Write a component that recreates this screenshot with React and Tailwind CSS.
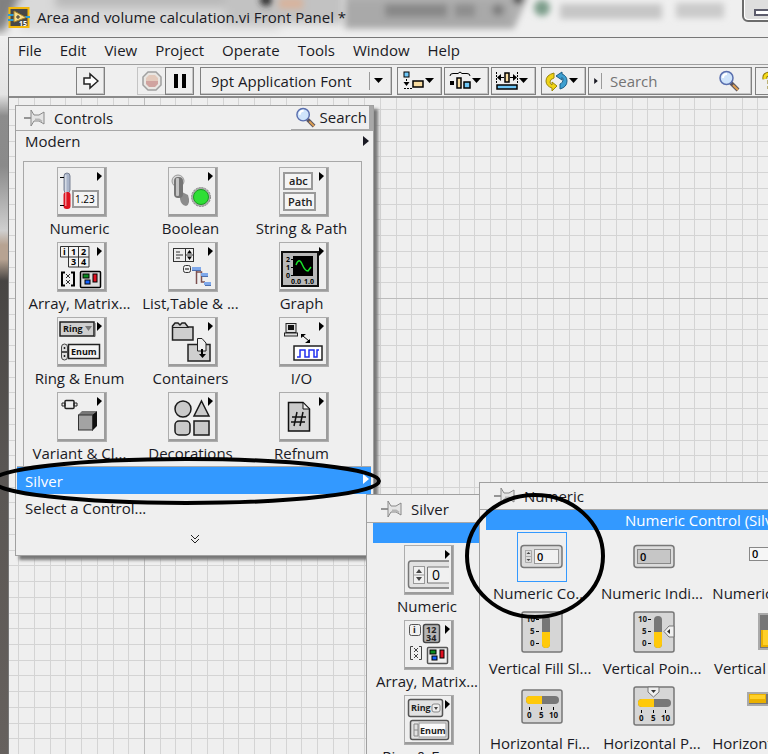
import React from "react";

const menus = ["File", "Edit", "View", "Project", "Operate", "Tools", "Window", "Help"];

// Small black triangle in the corner of a category tile
function Corner() {
  return <path d="M40 4 L45 8 L40 13 Z" fill="#000" />;
}

// Small LED, used in the cluster icons
function ClusterBox({ x, y, fill, stroke }) {
  return (
    <g transform={`translate(${x} ${y})`}>
      <rect x="0.5" y="0.5" width="20" height="16" rx="1" fill={fill} stroke={stroke} strokeWidth="1.500" />
      <rect x="3" y="3" width="6" height="4" fill="#0a8a20" stroke="#000" />
      <rect x="13" y="3" width="4" height="8" fill="#e01020" stroke="#000" />
      <rect x="5" y="9" width="5" height="4" fill="#1060ff" stroke="#000" />
    </g>
  );
}

function Icon({ children }) {
  return (
    <svg
      viewBox="0 0 49 49"
      className="size-[49px] shrink-0"
      fill="none"
      stroke="none"
      fontFamily="'Open Sans', sans-serif"
      aria-hidden="true"
    >
      {children}
    </svg>
  );
}

const NumericIcon = () => (
  <Icon>
    <rect x="7" y="5" width="6" height="20" rx="3" fill="#a9b4c9" stroke="#7a8294" />
    <rect x="6.500" y="24" width="7" height="17" rx="3" fill="#dd1420" />
    <rect x="8" y="7" width="1.500" height="31" fill="#fff" opacity="0.5" />
    <path d="M3 9.500H7M3 37.500H7" stroke="#000" />
    <rect x="16" y="23" width="25" height="16" fill="#f4f4f4" stroke="#9a9a9a" strokeWidth="2" />
    <text x="18" y="35" fontSize="10" fill="#000">1.23</text>
    <Corner />
  </Icon>
);

const BooleanIcon = () => (
  <Icon>
    <path d="M12 23 L20 27 Q23 36 18 38 Q13 37 12 31 Z" fill="#8c8c8c" />
    <circle cx="10" cy="13" r="6" fill="#d9d9d9" stroke="#999" />
    <rect x="6" y="9" width="9" height="21" rx="4" fill="#757575" />
    <rect x="8" y="10" width="3" height="18" rx="1" fill="#c4c4c4" />
    <circle cx="33" cy="29" r="9.500" fill="#aaa" stroke="#888" strokeDasharray="2 1" />
    <circle cx="33" cy="29" r="7.500" fill="#2fdf35" stroke="#1b9c22" />
    <Corner />
  </Icon>
);

const StringIcon = () => (
  <Icon>
    <rect x="5" y="5" width="28" height="16" fill="#f4f4f4" stroke="#9a9a9a" strokeWidth="2" />
    <text x="10" y="17" fontSize="11" fontWeight="600" fill="#222">abc</text>
    <rect x="5" y="25" width="31" height="17" fill="#f4f4f4" stroke="#9a9a9a" strokeWidth="2" />
    <text x="9" y="38" fontSize="11" fontWeight="600" fill="#222">Path</text>
    <Corner />
  </Icon>
);

const ArrayIcon = () => (
  <Icon>
    <path d="M3.500 3.500H32V24H11.500V14H3.500Z" fill="#f4f4f4" stroke="#333" />
    <path d="M11.500 3V14H32M21.500 3V24" stroke="#333" />
    <g fontSize="9" fontWeight="700" fill="#000">
      <text x="6" y="12">i</text>
      <text x="14" y="12">1</text>
      <text x="24" y="12">2</text>
      <text x="14" y="22">3</text>
      <text x="24" y="22">4</text>
    </g>
    <path d="M8 29.500H5V42.500H8M14 29.500H17V42.500H14" stroke="#000" strokeWidth="2" />
    <path d="M9 31l4 4m0-4l-4 4M9 37l4 4m0-4l-4 4" stroke="#333" />
    <ClusterBox x="23" y="28" fill="#ddd" stroke="#000" />
    <Corner />
  </Icon>
);

const ListIcon = () => (
  <Icon>
    <rect x="5.500" y="5.500" width="20" height="13" fill="#eee" stroke="#333" />
    <path d="M17.500 5V19M17 12H26M8 9H12M8 12H15M8 15H12" stroke="#333" />
    <path d="M21.500 7l2.500 3.500h-5ZM21.500 17l2.500-3.500h-5Z" fill="#000" />
    <rect x="15.500" y="22.500" width="7" height="7" rx="2" fill="#eee" stroke="#333" />
    <path d="M17 26H21" stroke="#000" />
    <path d="M28.500 27V41M28 29H33.500V39H37M33 33H35" stroke="#7d5050" strokeWidth="1.500" />
    <path d="M24 25.500H33M33 31.500H40M36 40.500H43" stroke="#7fa8ea" strokeWidth="3" />
    <path d="M24 27.500H33M34 33.500H40M37 42.500H43" stroke="#4c6fae" />
    <Corner />
  </Icon>
);

const GraphIcon = () => (
  <Icon>
    <rect x="3" y="9" width="36" height="34" fill="#b9b9b9" stroke="#111" strokeWidth="2" />
    <rect x="14" y="13" width="20" height="20" fill="#000" />
    <path d="M17 22 Q20 14 23 21 T29 28 L32 24" stroke="#19e02a" strokeWidth="1.500" />
    <path d="M12 16.500H14M12 24.500H14M12 32.500H14" stroke="#000" />
    <g fontSize="7" fontWeight="700" fill="#000">
      <text x="7" y="19">2</text>
      <text x="7" y="27">1</text>
      <text x="7" y="35">0</text>
      <text x="12" y="41">0.0</text>
      <text x="25" y="41">1.0</text>
    </g>
    <Corner />
  </Icon>
);

const RingIcon = () => (
  <Icon>
    <rect x="3" y="4" width="34" height="14" fill="#cfcfcf" stroke="#222" strokeWidth="1.500" />
    <path d="M4 18.500H38V5" stroke="#555" />
    <text x="6" y="14" fontSize="9" fontWeight="700" fill="#111">Ring</text>
    <path d="M28 8H35L31.500 13Z" fill="#777" />
    <rect x="11.500" y="26.500" width="31" height="14" fill="#f4f4f4" stroke="#222" strokeWidth="1.500" />
    <text x="14" y="37" fontSize="9" fontWeight="700" fill="#111">Enum</text>
    <rect x="4.500" y="26" width="6" height="16" rx="3" fill="#ddd" stroke="#444" />
    <path d="M5 34H10M7.500 29V31M7.500 37V39" stroke="#222" strokeWidth="1.500" />
    <Corner />
  </Icon>
);

const ContainersIcon = () => (
  <Icon>
    <path d="M4.500 22V8L7 5H10L12 7L14 5H17L20 9H25V22Z" fill="#cfcfcf" stroke="#222" strokeWidth="1.500" />
    <path d="M5 9.500H21" stroke="#222" />
    <path d="M20 26.500H42V43H20Z" fill="#cfcfcf" stroke="#222" strokeWidth="1.500" />
    <path d="M29.500 33V20.500H34L38 25V33Z" fill="#eee" stroke="#222" />
    <path d="M34 31V36" stroke="#000" strokeWidth="2" />
    <path d="M31 36H38L34.500 40Z" fill="#000" />
    <Corner />
  </Icon>
);

const IoIcon = () => (
  <Icon>
    <rect x="7" y="5.500" width="10" height="9" fill="#ddd" stroke="#222" />
    <rect x="9" y="7" width="6" height="5" fill="#111" />
    <rect x="5.500" y="15" width="13" height="3" fill="#ddd" stroke="#222" />
    <path d="M24 18L30 23" stroke="#000" />
    <path d="M22 16h5l-5 4ZM31 25h-5l5-4Z" fill="#000" />
    <rect x="15" y="28" width="28" height="14" fill="#fff" stroke="#222" strokeWidth="1.500" />
    <path d="M18 39H21V32H26V39H30V32H35V39H38V32H40" stroke="#2030f0" strokeWidth="1.500" />
    <Corner />
  </Icon>
);

const VariantIcon = () => (
  <Icon>
    <rect x="8" y="7.500" width="9" height="8" rx="1" fill="#eee" stroke="#222" strokeWidth="1.500" />
    <path d="M5 10H8V13H5ZM17 10H20V13H17Z" stroke="#222" />
    <path d="M21 22L25 18H40L35 22Z" fill="#777" />
    <path d="M35 22L40 18V33L35 38Z" fill="#111" />
    <rect x="21.500" y="22" width="14" height="15" fill="#a3a3a3" stroke="#333" />
    <Corner />
  </Icon>
);

const DecorationsIcon = () => (
  <Icon>
    <g fill="#cacaca" stroke="#1a1a1a" strokeWidth="1.500">
      <circle cx="15" cy="16" r="8" />
      <path d="M33.500 8L41 23H26Z" />
      <rect x="7" y="28" width="15" height="14" rx="4" />
      <rect x="26" y="28" width="15" height="14" />
    </g>
    <Corner />
  </Icon>
);

const RefnumIcon = () => (
  <Icon>
    <path d="M9.500 9.500H24L30.500 16V38H9.500Z" fill="#cacaca" stroke="#111" strokeWidth="1.500" />
    <path d="M24 9.500V16H30.500Z" fill="#f0f0f0" stroke="#111" />
    <path d="M18 19L15 33M24 19L21 33M13 24H27M12 29H26" stroke="#111" strokeWidth="1.500" />
    <Corner />
  </Icon>
);

const SilverNumericIcon = () => (
  <Icon>
    <path d="M44 15H6Q3.500 15 3.500 18V39Q3.500 42 6 42H44" fill="#e2e2e2" stroke="#777" strokeWidth="1.500" />
    <path d="M44 21H22.500V37H44" fill="#f0f0f0" stroke="#777" />
    <rect x="8.500" y="20.500" width="11" height="17" fill="#f0f0f0" stroke="#999" />
    <path d="M8 29H20" stroke="#999" />
    <path d="M14 23l3 4h-6ZM14 35l3-4h-6Z" fill="#444" />
    <text x="27" y="34" fontSize="14" fill="#000">0</text>
    <Corner />
  </Icon>
);

const SilverArrayIcon = () => (
  <Icon>
    <rect x="4.500" y="3.500" width="11" height="11" rx="2" fill="#f0f0f0" stroke="#555" />
    <text x="8" y="12" fontSize="9" fontWeight="700" fill="#222">i</text>
    <rect x="18.500" y="3.500" width="16" height="18" rx="2" fill="#b5b5b5" stroke="#444" strokeWidth="1.500" />
    <text x="21" y="12" fontSize="9" fontWeight="700" fill="#222">12</text>
    <text x="21" y="20" fontSize="9" fontWeight="700" fill="#222">34</text>
    <path d="M8 25.500H5.500V38.500H8M14 25.500H16.500V38.500H14" stroke="#444" />
    <path d="M9 27l4 4m0-4l-4 4M9 33l4 4m0-4l-4 4" stroke="#444" />
    <ClusterBox x="22" y="26" fill="#eee" stroke="#555" />
    <Corner />
  </Icon>
);

const SilverRingIcon = () => (
  <Icon>
    <rect x="3.500" y="3.500" width="34" height="17" rx="2" fill="#e2e2e2" stroke="#555" strokeWidth="1.500" />
    <text x="6" y="15" fontSize="9" fontWeight="700" fill="#222">Ring</text>
    <rect x="27" y="8" width="8" height="8" rx="2" fill="#eee" stroke="#888" />
    <path d="M29 11H33L31 14Z" fill="#444" />
    <rect x="5.500" y="24.500" width="38" height="19" rx="2" fill="#e2e2e2" stroke="#555" strokeWidth="1.500" />
    <rect x="14" y="27" width="27" height="14" fill="#fafafa" stroke="#999" />
    <path d="M9 28V40H13V28ZM9 34H13" stroke="#888" />
    <text x="15" y="38" fontSize="9" fontWeight="700" fill="#222">Enum</text>
    <Corner />
  </Icon>
);

const NumControlIcon = () => (
  <Icon>
    <rect x="3" y="12.500" width="41" height="22" rx="3" fill="#dcdcdc" stroke="#777" strokeWidth="1.500" />
    <rect x="16.500" y="16.500" width="24" height="14" fill="#f2f2f2" stroke="#999" />
    <path d="M7 17.500H13.500V29.500H7.500V17.500M7 23.500H13" stroke="#aaa" />
    <path d="M10.500 19l2 2h-4ZM10.500 28l2-2h-4Z" fill="#444" />
    <text x="19" y="28" fontSize="11" fontWeight="600" fill="#000">0</text>
  </Icon>
);

const NumIndicatorIcon = () => (
  <Icon>
    <rect x="4" y="12.500" width="40" height="22" rx="3" fill="#dcdcdc" stroke="#777" strokeWidth="1.500" />
    <rect x="7.500" y="16.500" width="33" height="14" fill="#c6c6c6" stroke="#888" />
    <text x="10" y="28" fontSize="11" fontWeight="600" fill="#000">0</text>
  </Icon>
);

const NumConstantIcon = () => (
  <Icon>
    <rect x="7.500" y="14.500" width="38" height="13" fill="#f6f6f6" stroke="#888" />
    <text x="10" y="25" fontSize="11" fontWeight="600" fill="#000">0</text>
  </Icon>
);

function VerticalScale() {
  return (
    <>
      <rect x="4" y="4" width="40" height="40" rx="2" fill="#d6d6d6" stroke="#777" strokeWidth="1.500" />
      <g fontSize="8" fontWeight="700" fill="#222">
        <text x="8" y="14">10</text>
        <text x="12" y="26">5</text>
        <text x="12" y="38">0</text>
      </g>
      <path d="M18 11.500H21M18 23.500H21M18 35.500H21" stroke="#000" />
      <rect x="24" y="8" width="8" height="32" rx="4" fill="#777" />
      <path d="M24 24H32V36Q32 40 28 40T24 36Z" fill="#ffc90a" />
    </>
  );
}

const VerticalFillIcon = () => (
  <Icon>
    <VerticalScale />
  </Icon>
);

const VerticalPointerIcon = () => (
  <Icon>
    <VerticalScale />
    <path d="M34 23.500L39 18H44V29H39Z" fill="#f0f0f0" stroke="#777" />
    <path d="M40 21V26L37 23.500Z" fill="#333" />
  </Icon>
);

const VerticalProgressIcon = () => (
  <Icon>
    <rect x="17" y="6" width="16" height="35" fill="#777" stroke="#aaa" strokeWidth="2" />
    <rect x="19" y="22" width="12" height="17" fill="#eab000" />
    <rect x="21" y="22" width="5" height="15" fill="#ffd028" />
  </Icon>
);

function HorizontalScale({ top, height, bar }) {
  return (
    <>
      <rect x="4" y={top} width="40" height={height} rx="2" fill="#d6d6d6" stroke="#777" strokeWidth="1.500" />
      <rect x="8" y={bar} width="33" height="8" rx="4" fill="#777" />
      <path d={`M24 ${bar}V${bar + 8}H12Q8 ${bar + 8} 8 ${bar + 4}T12 ${bar}Z`} fill="#ffc90a" />
      <path d={`M11.500 ${bar + 11}v3M23.500 ${bar + 11}v3M35.500 ${bar + 11}v3`} stroke="#000" />
      <g fontSize="8" fontWeight="700" fill="#111">
        <text x="9" y={bar + 22}>0</text>
        <text x="21" y={bar + 22}>5</text>
        <text x="31" y={bar + 22}>10</text>
      </g>
    </>
  );
}

const HorizontalFillIcon = () => (
  <Icon>
    <HorizontalScale top={7} height={33} bar={13} />
  </Icon>
);

const HorizontalPointerIcon = () => (
  <Icon>
    <HorizontalScale top={4} height={38} bar={16} />
    <path d="M18 4V9L23.500 14L29 9V4Z" fill="#f0f0f0" stroke="#777" />
    <path d="M21 7H26L23.500 10Z" fill="#333" />
  </Icon>
);

const HorizontalProgressIcon = () => (
  <Icon>
    <rect x="6" y="10" width="38" height="12" fill="#777" stroke="#aaa" strokeWidth="2" />
    <rect x="7" y="11" width="17" height="9" fill="#eab000" />
    <rect x="8" y="12" width="15" height="4" fill="#ffd028" />
  </Icon>
);

const modernItems = [
  { name: "Numeric", icon: NumericIcon },
  { name: "Boolean", icon: BooleanIcon },
  { name: "String & Path", icon: StringIcon },
  { name: "Array, Matrix...", icon: ArrayIcon },
  { name: "List,Table & ...", icon: ListIcon },
  { name: "Graph", icon: GraphIcon },
  { name: "Ring & Enum", icon: RingIcon },
  { name: "Containers", icon: ContainersIcon },
  { name: "I/O", icon: IoIcon },
  { name: "Variant & Cl...", icon: VariantIcon },
  { name: "Decorations", icon: DecorationsIcon },
  { name: "Refnum", icon: RefnumIcon },
];

const silverItems = [
  { name: "Numeric", icon: SilverNumericIcon },
  { name: "Array, Matrix...", icon: SilverArrayIcon },
  { name: "Ring & Enum", icon: SilverRingIcon },
];

const numericItems = [
  { name: "Numeric Co...", icon: NumControlIcon, selected: true },
  { name: "Numeric Indi...", icon: NumIndicatorIcon },
  { name: "Numeric Con...", icon: NumConstantIcon },
  { name: "Vertical Fill Sl...", icon: VerticalFillIcon },
  { name: "Vertical Poin...", icon: VerticalPointerIcon },
  { name: "Vertical Prog...", icon: VerticalProgressIcon },
  { name: "Horizontal Fi...", icon: HorizontalFillIcon },
  { name: "Horizontal P...", icon: HorizontalPointerIcon },
  { name: "Horizontal Pr...", icon: HorizontalProgressIcon },
];

// One palette entry: icon tile with its label below
function PaletteItem({ item, raised }) {
  const ItemIcon = item.icon;
  let frame = "border-transparent";
  if (raised) frame = "border-[#adadad] shadow-[inset_-2px_-2px_0_#9c9c9c]";
  if (item.selected) frame = "border-[#3399ff]";
  return (
    <button className="flex h-[75px] w-full flex-col items-center whitespace-nowrap">
      <span className={`ml-1 flex size-[50px] shrink-0 items-center justify-center border ${frame}`}>
        <ItemIcon />
      </span>
      <span className="leading-[22px]">{item.name}</span>
    </button>
  );
}

function Pin() {
  return (
    <svg viewBox="0 0 22 18" className="h-[18px] w-[22px] shrink-0" fill="none" aria-hidden="true">
      <path d="M0 9H7" stroke="#777" strokeWidth="1.500" />
      <path d="M7 1V17L10 12H15L20 15V3L15 6H10Z" fill="#e4e4e4" stroke="#888" />
      <path d="M11 10.500H15L18 12.500" stroke="#b5b5b5" strokeWidth="2" />
    </svg>
  );
}

function Magnifier({ className }) {
  return (
    <svg viewBox="0 0 22 22" className={className} fill="none" aria-hidden="true">
      <path d="M13 13L20 20" stroke="#5b5560" strokeWidth="4" />
      <path d="M15 15L20 20" stroke="#e0a050" strokeWidth="2" />
      <circle cx="8.500" cy="8" r="6.500" fill="#cfe4fb" stroke="#5a6fae" strokeWidth="1.500" />
      <path d="M5 8Q5 4 9 4" stroke="#fff" strokeWidth="2" />
    </svg>
  );
}

function Down() {
  return (
    <svg viewBox="0 0 9 5" className="h-[5px] w-[9px] shrink-0" aria-hidden="true">
      <path d="M0 0H9L4.500 5Z" fill="#000" />
    </svg>
  );
}

function Right({ className }) {
  return (
    <svg viewBox="0 0 6 10" className={`shrink-0 ${className}`} aria-hidden="true">
      <path d="M0 0L6 5L0 10Z" fill="currentColor" />
    </svg>
  );
}

function ToolButton({ label, children }) {
  return (
    <button
      aria-label={label}
      className="flex h-7 w-[45px] shrink-0 items-center border border-[#808080] pl-[3px] shadow-[inset_-1px_-1px_0_#c4c4c4]"
    >
      <svg viewBox="0 0 24 20" className="h-5 w-6 shrink-0" fill="none" aria-hidden="true">
        {children}
      </svg>
      <Down />
    </button>
  );
}

function TitleBar() {
  return (
    <header className="relative flex h-[37px] shrink-0 items-center overflow-hidden bg-[#efefef] pb-[3px] pl-2">
      {/* What shines through the glass title bar */}
      <svg className="absolute left-0 top-0 h-9 w-[768px]" aria-hidden="true">
        <defs>
          <filter id="glass" x="-20%" y="-50%" width="140%" height="200%">
            <feGaussianBlur stdDeviation="5" />
          </filter>
          <filter id="soft" x="-20%" y="-50%" width="140%" height="200%">
            <feGaussianBlur stdDeviation="3" />
          </filter>
        </defs>
        <g filter="url(#glass)">
          <rect x="20" y="-10" width="260" height="40" fill="#d9d9d9" />
          <rect x="55" y="-14" width="220" height="22" fill="#b9b9b9" />
          <path d="M-10 -10H24L4 32H-10Z" fill="#808080" />
          <rect x="225" y="-10" width="120" height="34" fill="#c2c2c2" />
        </g>
        <g filter="url(#soft)">
          <path d="M345 -8H530L514 29H345Z" fill="#b0b0b0" />
          <rect x="345" y="2" width="165" height="24" fill="#a9a9a9" />
          <rect x="385" y="4" width="62" height="13" fill="#888" />
          <rect x="455" y="4" width="20" height="13" fill="#8e8e8e" />
          <circle cx="498" cy="10" r="6" fill="#7e7e7e" />
          <circle cx="266" cy="0" r="6" fill="#2c2c2c" />
          <circle cx="518" cy="-1" r="5" fill="#333" />
          <rect x="279" y="-2" width="24" height="11" fill="#d8b49d" />
          <circle cx="542" cy="8" r="8" fill="#7b9d8a" />
          <rect x="560" y="4" width="102" height="15" fill="#c6c6c6" />
          <rect x="676" y="3" width="48" height="15" fill="#cacaca" />
        </g>
      </svg>
      <svg viewBox="0 0 22 21" className="relative h-[21px] w-[22px] shrink-0" fill="none" aria-hidden="true">
        <rect x="1.500" y="1" width="19" height="19" fill="#474747" stroke="#f3b80c" strokeWidth="2" />
        <path d="M0 8H6M0 13H6M17 10H22" stroke="#2b9bd8" strokeWidth="2" />
        <path d="M6 4L18 10.500L6 15Z" fill="#f7dc8c" stroke="#a88428" />
        <path d="M8 10H12M10 8V12" stroke="#333" />
        <text x="11" y="19" fontSize="7" fontWeight="700" fill="#fff" fontFamily="'Open Sans', sans-serif">15</text>
      </svg>
      <h1 className="relative ml-[7px] whitespace-nowrap">Area and volume calculation.vi Front Panel *</h1>
      <button
        aria-label="Minimize"
        className="absolute -top-1 left-[742px] h-[26px] w-10 rounded-bl-md border-2 border-[#6c6c6c] bg-[#dedede] shadow-[inset_1px_-1px_0_#fff]"
      >
        <span className="absolute left-2.5 top-[11px] h-[7px] w-5 border-2 border-[#5c5c6c] bg-white" />
      </button>
    </header>
  );
}

function Toolbar() {
  return (
    <div className="flex h-[33px] shrink-0 items-center overflow-hidden border-b-2 border-[#8a8a8a] pl-[67px]">
      <button
        aria-label="Run"
        className="flex h-7 w-[29px] shrink-0 items-center justify-center border border-[#808080] shadow-[inset_-1px_-1px_0_#c4c4c4]"
      >
        <svg viewBox="0 0 16 18" className="h-[18px] w-4" aria-hidden="true">
          <path d="M1 6H7V2L15 9L7 16V12H1Z" fill="#fff" stroke="#222" strokeWidth="1.500" />
        </svg>
      </button>
      <button
        aria-label="Abort Execution"
        className="ml-8 flex h-7 w-[28px] shrink-0 items-center justify-center border border-r-0 border-[#c4c4c4]"
      >
        <svg viewBox="0 0 20 20" className="size-5" aria-hidden="true">
          <path d="M6 1H14L19 6V14L14 19H6L1 14V6Z" fill="#e9e6e2" stroke="#a0a0a0" strokeWidth="1.500" />
          <path d="M7 4H13L16 7V10H4V7Z" fill="#e3c9bb" />
          <path d="M4 10H16V13L13 16H7L4 13Z" fill="#d0a39f" />
        </svg>
      </button>
      <button
        aria-label="Pause"
        className="flex h-7 w-[29px] shrink-0 items-center justify-center gap-1 border border-[#808080] shadow-[inset_-1px_-1px_0_#c4c4c4]"
      >
        <span className="h-3.5 w-1 bg-black" />
        <span className="h-3.5 w-1 bg-black" />
      </button>
      <div className="ml-1.5 flex h-7 w-48 shrink-0 items-center border border-[#808080] shadow-[inset_-1px_-1px_0_#c4c4c4]">
        <select aria-label="Text Settings" className="h-6 w-[168px] appearance-none pl-2.5 outline-none">
          <option>9pt Application Font</option>
        </select>
        <span className="mr-1 h-[18px] w-px bg-[#9a9a9a]" />
        <Down />
      </div>
      <div className="ml-[5px] flex gap-[2px]">
        <ToolButton label="Align Objects">
          <rect x="3" y="1" width="5" height="5" fill="#6fc8f8" stroke="#000" />
          <path d="M5.500 8V14M3 17.500H12" stroke="#000" strokeDasharray="2 1" />
          <path d="M2.500 11H8.500L5.500 15Z" fill="#000" />
          <rect x="12" y="10" width="10" height="6" fill="#f8dca0" stroke="#000" strokeWidth="1.500" />
        </ToolButton>
        <ToolButton label="Distribute Objects">
          <path d="M2 5Q2 2.500 5 2.500H10L12 1L14 2.500H19Q22 2.500 22 5" stroke="#000" />
          <rect x="2" y="10" width="4" height="4" fill="#000" />
          <rect x="9" y="7" width="4" height="10" fill="#f8dca0" stroke="#000" strokeWidth="1.500" />
          <rect x="16" y="11" width="6" height="6" fill="#6fc8f8" stroke="#000" strokeWidth="1.500" />
        </ToolButton>
        <ToolButton label="Resize Objects">
          <path d="M1.500 1V12M22.500 1V12" stroke="#000" strokeDasharray="2 1" />
          <path d="M4 6.500H9M15 6.500H20" stroke="#000" />
          <path d="M6 3V10L2 6.500ZM18 3V10L22 6.500Z" fill="#000" />
          <rect x="10" y="2" width="4" height="9" fill="#f8dca0" stroke="#000" strokeWidth="1.500" />
          <rect x="2" y="14" width="20" height="4" fill="#6fc8f8" stroke="#000" strokeWidth="1.500" />
        </ToolButton>
      </div>
      <div className="ml-[5px] flex">
        <ToolButton label="Reorder">
          <path d="M9 2V7Q5 8 5 11Q5 13 7 14V11L12 15L7 20V17Q1 15 1 10Q1 4 9 2Z" fill="#efd316" stroke="#9a8608" />
          <path d="M15 18V13Q18 12 18 9Q18 7 17 6.500V9L11 5L17 1V3Q22 5 22 10Q22 16 15 18Z" fill="#3e9fd0" stroke="#1a5f88" />
        </ToolButton>
      </div>
      <label className="ml-[2px] flex h-7 w-[164px] shrink-0 items-center border border-[#808080] shadow-[inset_-1px_-1px_0_#c4c4c4]">
        <Right className="ml-1 h-1.5 w-1.5" />
        <span className="ml-0.5 h-4 w-px bg-[#9a9a9a]" />
        <input
          type="text"
          aria-label="Search"
          placeholder="Search"
          className="ml-2 w-[108px] min-w-0 outline-none placeholder:text-[#747474]"
        />
        <Magnifier className="size-[22px] shrink-0" />
      </label>
      <button
        aria-label="Show Context Help"
        className="ml-[3px] flex h-7 w-[29px] shrink-0 items-center border border-[#808080] pl-1.5"
      >
        <svg viewBox="0 0 16 20" className="h-5 w-4 shrink-0" fill="none" aria-hidden="true">
          <path d="M3 8Q2 3 8 3T12 8Q12 10 8 11V13M8 15V18" stroke="#8a7400" strokeWidth="5" />
          <path d="M3 8Q2 3 8 3T12 8Q12 10 8 11V13M8 15V18" stroke="#f5da1c" strokeWidth="3" />
        </svg>
      </button>
    </div>
  );
}

// Front panel grid: 11 cells fall on every 173 pixels
function Grid() {
  const lines = Array.from({ length: 11 }, (_, i) => Math.round((i * 173) / 11));
  return (
    <svg className="absolute inset-0 size-full" shapeRendering="crispEdges" aria-hidden="true">
      <defs>
        <pattern id="grid" x="135" y="200" width="173" height="173" patternUnits="userSpaceOnUse">
          {lines.map((n) => (
            <g key={n} fill="#d4d4d4">
              <rect x={n} y="0" width="1" height="173" />
              <rect x="0" y={n} width="173" height="1" />
            </g>
          ))}
        </pattern>
      </defs>
      <rect width="100%" height="100%" fill="url(#grid)" />
      <rect x="135" y="0" width="1" height="100%" fill="#bcbcbc" />
      <rect x="0" y="200" width="100%" height="1" fill="#bcbcbc" />
    </svg>
  );
}

function ControlsPalette() {
  return (
    <section className="absolute left-[15px] top-[105px] flex w-[359px] flex-col border border-[#a0a0a0] bg-[#efefef] shadow-[4px_4px_3px_#777]">
      <div className="flex h-[25px] items-center border-b border-[#a8a8a8] pl-2">
        <Pin />
        <h2 className="ml-2">Controls</h2>
        <button className="ml-auto flex h-[25px] items-center gap-1 border-b-2 border-r-4 border-[#a8a8a8] pl-1 pr-0.5">
          <Magnifier className="size-[21px]" />
          Search
        </button>
      </div>
      <button className="flex h-6 items-center justify-between pb-1 pl-[9px] pr-1">
        Modern
        <Right className="h-2.5 w-1.5" />
      </button>
      <div className="ml-[7px] mt-1.5 h-[305px] w-[339px] overflow-hidden border border-b-0 border-[#a8a8a8] pt-[5px]">
        <div className="grid w-[333px] grid-cols-3">
          {modernItems.map((item) => (
            <PaletteItem key={item.name} item={item} raised />
          ))}
        </div>
      </div>
      <button className="ml-px mr-0.5 flex h-7 items-center justify-between border-t border-[#a8a8a8] bg-[#3399ff] pl-2 pr-0.5 text-white">
        Silver
        <Right className="mb-1 h-2.5 w-1.5" />
      </button>
      <button className="h-7 pl-[9px] text-left">Select a Control...</button>
      <button aria-label="Show more categories" className="flex h-[33px] items-center justify-center">
        <svg viewBox="0 0 10 10" className="size-2.5" fill="none" aria-hidden="true">
          <path d="M1 1L5 5L9 1M1 5L5 9L9 5" stroke="#222" />
        </svg>
      </button>
    </section>
  );
}

function SilverPalette() {
  return (
    <section className="absolute left-[366px] top-[494px] w-[122px] border border-[#a0a0a0] bg-[#efefef]">
      <div className="flex h-7 items-center border-b border-[#a8a8a8] pl-[14px]">
        <Pin />
        <h2 className="ml-2">Silver</h2>
      </div>
      <div className="ml-1.5 h-5 bg-[#3399ff]" />
      <div className="ml-1 mt-[2px] flex w-28 flex-col">
        {silverItems.map((item) => (
          <PaletteItem key={item.name} item={item} raised />
        ))}
      </div>
    </section>
  );
}

function NumericPalette() {
  return (
    <section className="absolute left-[479px] top-[482px] w-[348px] border border-[#a0a0a0] bg-[#efefef]">
      <div className="flex h-[27px] items-center border-b border-[#a8a8a8] pl-[14px]">
        <Pin />
        <h2 className="ml-2">Numeric</h2>
      </div>
      <div className="mx-1.5 flex h-5 items-center bg-[#3399ff] pl-[139px] text-white">
        <span className="whitespace-nowrap">Numeric Control (Silver)</span>
      </div>
      <div className="ml-1 mt-[2px] grid w-[336px] grid-cols-3">
        {numericItems.map((item) => (
          <PaletteItem key={item.name} item={item} />
        ))}
      </div>
    </section>
  );
}

// Hand-drawn rings round the two menu choices
function Rings() {
  return (
    <svg className="pointer-events-none absolute left-0 top-0 h-[754px] w-[768px]" fill="none" aria-hidden="true">
      <ellipse cx="186" cy="481" rx="193" ry="22" stroke="#000" strokeWidth="4" />
      <ellipse cx="535" cy="556" rx="68" ry="61" stroke="#000" strokeWidth="4" />
    </svg>
  );
}

export default function App() {
  return (
    <div className="relative flex h-screen flex-col overflow-hidden bg-[#efefef] font-['Open_Sans','Noto_Sans',sans-serif] text-[15px] leading-5 text-[#1a1a24]">
      <TitleBar />
      <div className="flex min-h-0 flex-1">
        <div className="w-2 shrink-0 bg-[linear-gradient(#efefef_0%,#e4e4e4_8%,#8c8c8c_11%,#8a8a8a_18%,#cfcfcf_27%,#b7a392_29%,#b7a392_31%,#474543_34%,#5a5653_60%,#66615e_100%)]" />
        <main className="flex min-w-0 flex-1 flex-col border-l border-t border-[#777]">
          <nav className="flex h-[27px] shrink-0 items-center border-b border-[#a0a0a0] pb-[3px]">
            {menus.map((menu) => (
              <button key={menu} className="px-[9px]">
                {menu}
              </button>
            ))}
          </nav>
          <Toolbar />
          <div className="relative flex-1">
            <Grid />
          </div>
        </main>
      </div>
      <ControlsPalette />
      <SilverPalette />
      <NumericPalette />
      <Rings />
    </div>
  );
}
